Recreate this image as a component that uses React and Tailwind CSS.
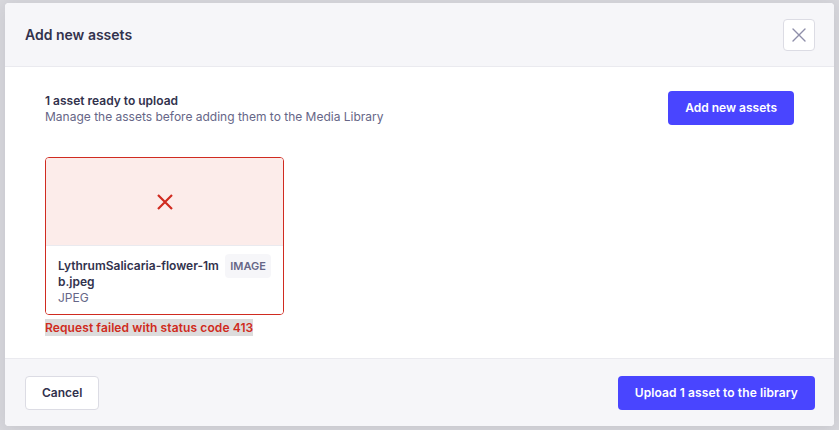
import React from "react";

export default function App() {
  return (
    <div
      className="w-[839px] h-[430px] bg-[#d8d8dd] pt-[3px] pl-[5px] pr-[5px] pb-[4px] overflow-hidden"
      style={{ fontFamily: "Inter, 'Noto Sans', sans-serif" }}
    >
      <div className="h-full flex flex-col rounded-[4px] bg-white overflow-hidden shadow-[0_2px_15px_rgba(33,33,52,0.1)]">
        {/* Header */}
        <div className="h-[64px] shrink-0 flex items-center justify-between pl-[20px] pr-[19px] bg-[#f6f6f9] border-b border-[#eaeaef]">
          <h2 className="text-[14px] font-semibold text-[#32324d]">Add new assets</h2>
          <button className="w-[32px] h-[32px] flex items-center justify-center bg-white border border-[#dcdce4] rounded-[4px]">
            <svg width="14" height="14" viewBox="0 0 14 14" fill="none">
              <path d="M1 1L13 13M13 1L1 13" stroke="#8e8ea9" strokeWidth="1.4" strokeLinecap="round" />
            </svg>
          </button>
        </div>

        {/* Body */}
        <div className="flex-1 px-[40px] pt-[24px]">
          <div className="flex items-start justify-between">
            <div className="pt-[2px]">
              <div className="text-[12px] leading-[16px] font-semibold text-[#32324d]">1 asset ready to upload</div>
              <div className="text-[12px] leading-[16px] text-[#666687]">Manage the assets before adding them to the Media Library</div>
            </div>
            <button className="h-[34px] px-[17px] rounded-[4px] bg-[#4945ff] text-white text-[12px] font-semibold">
              Add new assets
            </button>
          </div>

          <div className="mt-[32px] w-[239px]">
            <div className="rounded-[4px] border border-[#d02b20] overflow-hidden">
              <div className="h-[88px] bg-[#fcecea] flex items-center justify-center border-b border-[#eaeaef]">
                <svg width="18" height="18" viewBox="0 0 18 18" fill="none">
                  <path d="M2 2L16 16M16 2L2 16" stroke="#d02b20" strokeWidth="2.2" />
                </svg>
              </div>
              <div className="bg-white px-[12px] pt-[8px] pb-[8px] flex items-start justify-between gap-[6px]">
                <div className="pt-[4px]">
                  <div className="text-[12px] leading-[16px] font-semibold text-[#32324d] break-all">
                    LythrumSalicaria-flower-1mb.jpeg
                  </div>
                  <div className="text-[12px] leading-[16px] text-[#666687]">JPEG</div>
                </div>
                <span className="shrink-0 h-[24px] px-[5px] rounded-[4px] bg-[#f6f6f9] flex items-center text-[11px] font-semibold text-[#666687]">
                  IMAGE
                </span>
              </div>
            </div>
            <div className="mt-[3px] leading-[16px]">
              <span className="bg-[#dcdcdc] text-[12px] leading-[16px] font-semibold text-[#d02b20] tracking-[0.1px] py-[1px]">
                Request failed with status code 413
              </span>
            </div>
          </div>
        </div>

        {/* Footer */}
        <div className="h-[68px] shrink-0 flex items-center justify-between pl-[20px] pr-[19px] bg-[#f6f6f9] border-t border-[#eaeaef]">
          <button className="h-[34px] px-[16px] rounded-[4px] bg-white border border-[#dcdce4] text-[12px] font-semibold text-[#32324d]">
            Cancel
          </button>
          <button className="h-[34px] px-[17px] rounded-[4px] bg-[#4945ff] text-white text-[12px] font-semibold tracking-[0.1px]">
            Upload 1 asset to the library
          </button>
        </div>
      </div>
    </div>
  );
}
